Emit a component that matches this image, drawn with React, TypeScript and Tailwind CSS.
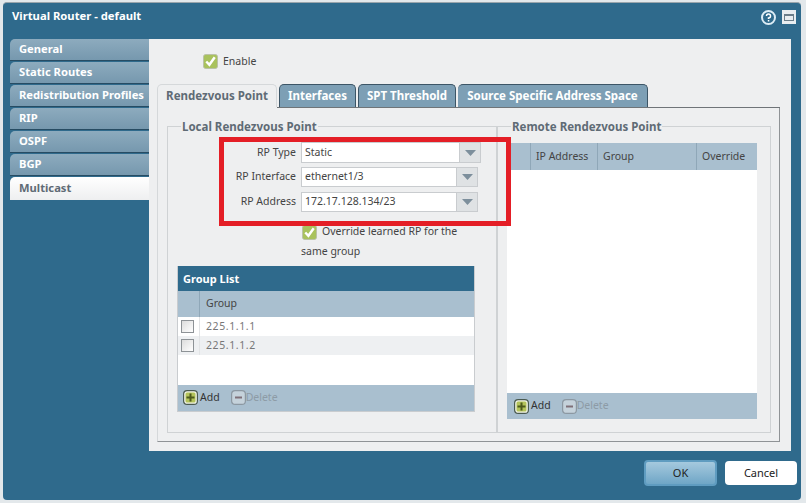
import React from "react";

const sideTabs = ["General", "Static Routes", "Redistribution Profiles", "RIP", "OSPF", "BGP"];

const GreenCheck = () => (
  <svg width="15" height="15" viewBox="0 0 16 16" className="shrink-0">
    <rect x="0.5" y="0.5" width="15" height="15" rx="2.5" fill="#a9c25d" stroke="#b9bfa8" />
    <path d="M3.5 8 L6.8 11.5 L12.5 3.5" fill="none" stroke="#ffffff" strokeWidth="2.6" />
  </svg>
);

const AddIcon = () => (
  <svg width="15" height="15" viewBox="0 0 15 15" className="shrink-0">
    <rect x="0.6" y="0.6" width="13.8" height="13.8" rx="3.5" fill="#f4f6e8" stroke="#4a5a50" strokeWidth="1.2" />
    <rect x="2.5" y="2.5" width="10" height="10" rx="1.5" fill="#b3c35a" />
    <path d="M7.5 3.5 V11.5 M3.5 7.5 H11.5" stroke="#4d5a1c" strokeWidth="2" />
  </svg>
);

const DeleteIcon = () => (
  <svg width="15" height="15" viewBox="0 0 15 15" className="shrink-0">
    <rect x="0.6" y="0.6" width="13.8" height="13.8" rx="3.5" fill="#c5d2db" stroke="#8c98a2" strokeWidth="1.2" />
    <path d="M4 7.5 H11" stroke="#7f7078" strokeWidth="2" />
  </svg>
);

const Select = ({ value, width, height, btn }: { value: string; width: string; height: string; btn: string }) => (
  <div className={`flex border border-[#c9cccf] bg-white ${width} ${height}`}>
    <div className="flex-1 flex items-center pl-[3px] text-[#444]">{value}</div>
    <div className={`${btn} bg-[#dfe2e4] border-l border-[#c9cccf] flex items-center justify-center`}>
      <svg width="11" height="6" viewBox="0 0 11 6">
        <path d="M0 0 H11 L5.5 6 Z" fill="#7d8f9c" />
      </svg>
    </div>
  </div>
);

const TableFooter = ({ pad }: { pad: string }) => (
  <div className={`h-[26px] bg-[#a9bfcf] flex items-center text-[#333] ${pad}`}>
    <AddIcon />
    <span className="ml-[2px]">Add</span>
    <span className="ml-[11px] flex items-center text-[#8d9ba6]">
      <DeleteIcon />
      <span>Delete</span>
    </span>
  </div>
);

const Row = ({ label, striped }: { label: string; striped?: boolean }) => (
  <div className={`h-[19px] flex ${striped ? "bg-[#eef0f2]" : "bg-white"}`}>
    <div className="w-[22px] border-r border-[#e2e4e6] flex items-center pl-[3px]">
      <div className="w-[13px] h-[13px] border border-[#8d9296] bg-gradient-to-br from-[#dcdcdc] to-[#ffffff]" />
    </div>
    <div className="flex-1 flex items-center pl-[6px] pt-[1px] text-[#777] tracking-[0.6px]">{label}</div>
  </div>
);

export default function App() {
  return (
    <div
      className="w-[806px] h-[503px] overflow-hidden bg-[#e3e8eb] pt-[2px] pl-[3px] text-[10.5px] text-[#444]"
      style={{ fontFamily: '"Noto Sans", Tahoma, sans-serif' }}
    >
      <div className="w-[798px] h-[498px] bg-[#2f6a8c] rounded-[4px] border-t border-[#9aa5ac] flex flex-col">
        {/* title bar */}
        <div className="h-[36px] flex items-center pl-[9px] pr-[5px] text-white font-bold text-[11.25px]">
          <span className="flex-1 mb-[10px]">Virtual Router - default</span>
          <div className="flex items-center gap-[6px] mb-[8px]">
            <svg width="15" height="15" viewBox="0 0 15 15">
              <circle cx="7.5" cy="7.5" r="6.5" fill="#2f6a8c" stroke="#dcecf5" strokeWidth="2" />
              <path d="M5.5 6 A2 2 0 1 1 7.5 8 V9" fill="none" stroke="#ffffff" strokeWidth="1.5" />
              <rect x="6.8" y="10" width="1.5" height="1.5" fill="#ffffff" />
            </svg>
            <div className="w-[14px] h-[14px] bg-[#e8edf0] flex items-center justify-center">
              <div className="w-[10px] h-[7px] border border-[#6b7d89] border-t-2" />
            </div>
          </div>
        </div>

        <div className="h-[412px] flex pl-[7px] pr-[10px]">
          {/* left tabs */}
          <div className="w-[139px] shrink-0 flex flex-col font-bold text-white text-[11.2px]">
            {sideTabs.map((t) => (
              <div
                key={t}
                className="h-[22px] mb-[1px] pl-[9px] flex items-center rounded-tl-[5px] bg-gradient-to-b from-[#8dabbe] to-[#7698ae] border-b border-[#274c63]"
              >
                {t}
              </div>
            ))}
            <div className="h-[23px] pl-[9px] flex items-center rounded-tl-[5px] bg-gradient-to-b from-white to-[#eeeff0] text-[#5f6b75]">
              Multicast
            </div>
          </div>

          {/* main panel */}
          <div className="relative flex-1 min-w-0 bg-[#eeeff0] pt-[14px] pl-[8px] pr-[11px]">
            <div className="h-[17px] pl-[46px] flex items-center gap-[5px]">
              <GreenCheck />
              <span>Enable</span>
            </div>

            <div className="mt-[14px] h-[23px] flex gap-[2px] font-bold text-white text-[11.5px]">
              <div className="w-[120px] bg-[#eeeff0] rounded-t-[5px] border border-b-0 border-[#d5d8da] flex items-center justify-center text-[#5f6b75]">
                Rendezvous Point
              </div>
              <div className="w-[77px] bg-[#7d9fb5] rounded-t-[5px] border-t border-x border-[#3c5566] flex items-center justify-center">
                Interfaces
              </div>
              <div className="w-[98px] bg-[#7d9fb5] rounded-t-[5px] border-t border-x border-[#3c5566] flex items-center justify-center">
                SPT Threshold
              </div>
              <div className="w-[190px] bg-[#7d9fb5] rounded-t-[5px] border-t border-r border-[#3c5566] flex items-center justify-center">
                Source Specific Address Space
              </div>
            </div>

            <div className="h-[335px] border border-t-0 border-l-[#d5d8da] border-r-[#8f9396] border-b-[#8f9396] pl-[9px] pr-[8px] flex relative">
              <div className="absolute top-0 left-[119px] right-[-1px] h-px bg-[#6f7478]" />

              {/* local */}
              <fieldset className="w-[330px] h-[315px] mt-[11px] border border-[#cfd2d4] pl-[9px]">
                <legend className="ml-[4px] px-[1px] font-bold text-[#5f6b75] text-[11.5px]">Local Rendezvous Point</legend>
                <div className="mt-[7px] flex flex-col">
                  <div className="flex items-center gap-[5px]">
                    <span className="w-[119px] text-right">RP Type</span>
                    <Select value="Static" width="w-[180px]" height="h-[21px]" btn="w-[21px]" />
                  </div>
                  <div className="mt-[4px] flex items-center gap-[5px]">
                    <span className="w-[119px] text-right">RP Interface</span>
                    <Select value="ethernet1/3" width="w-[177px]" height="h-[20px]" btn="w-[21px]" />
                  </div>
                  <div className="mt-[5px] flex items-center gap-[5px]">
                    <span className="w-[119px] text-right">RP Address</span>
                    <Select value="172.17.128.134/23" width="w-[177px]" height="h-[20px]" btn="w-[21px]" />
                  </div>
                  <div className="mt-[12px] pl-[125px] flex items-center gap-[5px]">
                    <GreenCheck />
                    <span>Override learned RP for the</span>
                  </div>
                  <div className="mt-[4px] pl-[124px]">same group</div>
                </div>

                <div className="mt-[6px] w-[298px] border-x border-b border-[#c9cccf]">
                  <div className="h-[25px] bg-[#2f6a8c] flex items-center pl-[5px] pt-[1px] font-bold text-white text-[11px]">Group List</div>
                  <div className="h-[26px] bg-[#a9bfcf] flex">
                    <div className="w-[22px] border-r border-[#8fa7b8]" />
                    <div className="pl-[6px] flex items-center">Group</div>
                  </div>
                  <Row label="225.1.1.1" />
                  <Row label="225.1.1.2" striped />
                  <div className="h-[30px] bg-white" />
                  <TableFooter pad="pl-[5px]" />
                </div>
              </fieldset>

              {/* remote */}
              <fieldset className="w-[274px] h-[315px] mt-[11px] border border-[#cfd2d4] pl-[9px]">
                <legend className="ml-[4px] px-[1px] font-bold text-[#5f6b75] text-[11.5px]">Remote Rendezvous Point</legend>
                <div className="mt-[8px] w-[250px] h-[276px] flex flex-col bg-white">
                  <div className="h-[27px] bg-[#a9bfcf] flex">
                    <div className="w-[24px] border-r border-[#8fa7b8]" />
                    <div className="w-[67px] pl-[5px] border-r border-[#8fa7b8] flex items-center">IP Address</div>
                    <div className="w-[99px] pl-[5px] border-r border-[#8fa7b8] flex items-center">Group</div>
                    <div className="flex-1 pl-[5px] flex items-center">Override</div>
                  </div>
                  <div className="flex-1" />
                  <TableFooter pad="pl-[7px]" />
                </div>
              </fieldset>
            </div>

            {/* annotation over the form */}
            <div className="absolute left-[70px] top-[98px] w-[292px] h-[89px] border-[5px] border-[#e41e26]" />
          </div>
        </div>

        <div className="flex justify-end gap-[8px] pr-[4px] pt-[9px] text-[11px]">
          <button className="w-[73px] h-[26px] rounded-[4px] border-2 border-[#5f9cc0] bg-gradient-to-b from-[#a5c9de] to-[#6fa6c6] text-[#222]">
            OK
          </button>
          <button className="w-[72px] h-[24px] mt-px rounded-[4px] bg-white text-[#222]">Cancel</button>
        </div>
      </div>
    </div>
  );
}
